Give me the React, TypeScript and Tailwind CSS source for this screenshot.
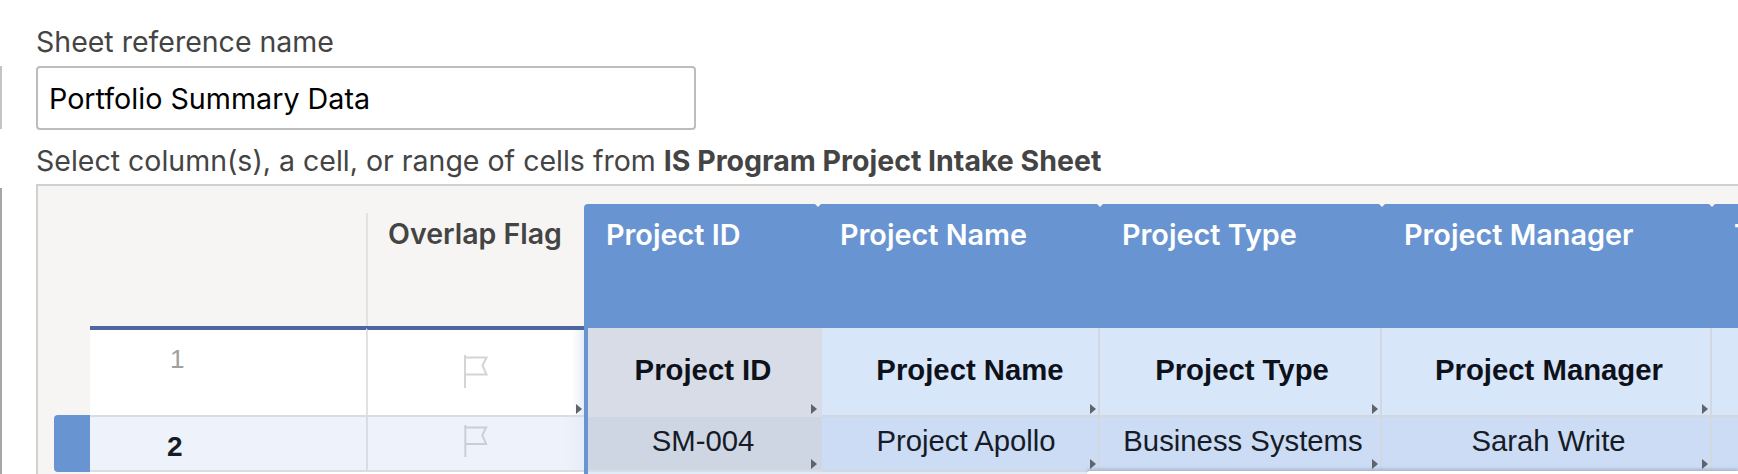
const columns = [
  { key: 'id', title: 'Project ID', value: 'SM-004', width: 'w-[234px]' },
  { key: 'name', title: 'Project Name', value: 'Project Apollo', width: 'w-[282px]' },
  { key: 'type', title: 'Project Type', value: 'Business Systems', width: 'w-[282px]' },
  { key: 'manager', title: 'Project Manager', value: 'Sarah Write', width: 'w-[330px]' },
];

function FlagIcon({ className }: { className: string }) {
  return (
    <svg viewBox="0 0 25 33" className={className} fill="none" stroke="currentColor" strokeWidth="2">
      <path d="M2 0V33" />
      <path d="M2 2.5H23.5L19.5 10.5L23.5 19.5H2" />
    </svg>
  );
}

// small dark triangle in the lower right corner of a cell
function CellMark() {
  return (
    <span className="absolute right-[2px] bottom-[1px] h-0 w-0 border-y-[5px] border-l-[6px] border-y-transparent border-l-[#5f636a]" />
  );
}

// white notch on top of the header where two columns meet
function HeaderNotch() {
  return (
    <span className="absolute -top-px right-[-4px] z-10 h-0 w-0 border-x-[4px] border-t-[4px] border-x-transparent border-t-[#f6f5f3]" />
  );
}

export default function App() {
  return (
    <div className="flex h-[474px] w-[1738px] overflow-hidden bg-white font-['Inter',sans-serif]">
      {/* edge of the panel next to this one */}
      <div className="flex w-[2px] shrink-0 flex-col">
        <div className="mt-[66px] h-[63px] bg-[#c4c4c4]" />
        <div className="mt-[59px] flex-1 bg-[#a6a6a6]" />
      </div>

      <div className="flex min-w-0 flex-1 flex-col pl-[34px]">
        <div className="pt-[27px] text-[28.5px] leading-[30px] text-[#444444]">Sheet reference name</div>
        <input
          readOnly
          value="Portfolio Summary Data"
          className="mt-[9px] block h-[64px] w-[660px] shrink-0 rounded-[4px] border-2 border-[#bdbdbd] bg-white px-[11px] text-[28.7px] text-black outline-none"
        />
        <div className="mt-[16px] whitespace-nowrap text-[28.5px] leading-[30px] text-[#444444]">
          Select column(s), a cell, or range of cells from <span className="font-bold">IS Program Project Intake Sheet</span>
        </div>

        <div className="relative mt-[8px] flex min-h-0 flex-1 flex-col border-t-2 border-l-2 border-[#d0d0d0] bg-[#f6f5f3]">
          {/* header */}
          <div className="flex h-[142px] shrink-0">
            <div className="w-[52px] shrink-0" />
            <div className="w-[276px] shrink-0 border-b-2 border-[#4f659f]" />
            <div className="w-[218px] shrink-0 border-b-2 border-[#4f659f]">
              <div className="mt-[27px] h-[113px] border-l-2 border-[#e2e2e2] pr-[2px] text-center">
                <div className="pt-[6px] whitespace-nowrap text-[28.5px] leading-[30px] font-semibold text-[#444444]">Overlap Flag</div>
              </div>
            </div>
            <div className="mt-[18px] flex flex-1 rounded-t-[4px] bg-[#6894d1]">
              {columns.map((col) => (
                <div key={col.key} className={`relative ${col.width} shrink-0 pt-[15px] pl-[22px]`}>
                  <div className="whitespace-nowrap text-[28.8px] leading-[32px] font-semibold text-white">{col.title}</div>
                  <HeaderNotch />
                </div>
              ))}
              <div className="flex-1 pt-[15px] pl-[22px] text-[28.8px] leading-[32px] font-semibold text-white">T</div>
            </div>
          </div>

          {/* row 1 */}
          <div className="flex h-[87px] shrink-0">
            <div className="w-[52px] shrink-0" />
            <div className="w-[276px] shrink-0 border-t-2 border-[#4f659f] bg-white pt-[14px] pl-[80px] font-['Liberation_Sans',sans-serif] text-[26px] leading-[30px] text-[#a0a0a0]">
              1
            </div>
            <div className="relative w-[218px] shrink-0 border-t-2 border-l-2 border-[#4f659f] border-l-[#e2e2e2] bg-white pt-[25px] pl-[95px]">
              <FlagIcon className="h-[33px] w-[25px] text-[#d4d4d4]" />
              <div className="absolute inset-y-0 right-0 w-[12px] bg-gradient-to-r from-transparent to-[#e8edf6]" />
              <CellMark />
            </div>
            <div className="flex flex-1 border-l-4 border-[#6894d1] font-['Liberation_Sans',sans-serif] text-[29.3px] font-bold text-[#0d111a]">
              <div className="relative flex w-[234px] shrink-0 items-center justify-center bg-[#d8dce6] pr-[4px] pb-[3px]">
                Project ID
                <span className="absolute right-[5px] bottom-[1px] h-0 w-0 border-y-[5px] border-l-[6px] border-y-transparent border-l-[#5f636a]" />
              </div>
              <div className="relative flex w-[278px] shrink-0 items-center justify-center border-r-2 border-[#d3d8e0] bg-[#d8e6f9] pb-[3px] pl-[20px]">
                {columns[1].title}
                <CellMark />
              </div>
              <div className="relative flex w-[282px] shrink-0 items-center justify-center border-r-2 border-[#d3d8e0] bg-[#d8e6f9] pb-[3px] pl-[4px]">
                {columns[2].title}
                <CellMark />
              </div>
              <div className="relative flex w-[330px] shrink-0 items-center justify-center border-r-2 border-[#d3d8e0] bg-[#d8e6f9] pb-[3px] pl-[6px]">
                {columns[3].title}
                <CellMark />
              </div>
              <div className="flex-1 bg-[#d8e6f9]" />
            </div>
          </div>

          {/* row 2 */}
          <div className="flex h-[57px] shrink-0">
            <div className="flex w-[52px] shrink-0 justify-end">
              <div className="h-full w-[36px] rounded-l-[4px] bg-[#6894d1]" />
            </div>
            <div className="w-[276px] shrink-0 border-y-2 border-[#d8dce4] bg-[#eef2fa] pt-[15px] pl-[77px] font-['Liberation_Sans',sans-serif] text-[28px] leading-[30px] font-bold text-[#161b26]">
              2
            </div>
            <div className="relative w-[218px] shrink-0 border-y-2 border-l-2 border-[#d8dce4] bg-[#eef2fa] pt-[8px] pl-[95px]">
              <FlagIcon className="h-[32px] w-[25px] text-[#c9ced6]" />
              <div className="absolute inset-y-0 right-0 w-[20px] bg-gradient-to-r from-transparent to-[#e6edf9]" />
            </div>
            <div className="flex flex-1 border-l-4 border-[#6894d1] font-['Liberation_Sans',sans-serif] text-[29.3px] text-[#161b26]">
              <div className="relative flex w-[234px] shrink-0 items-start justify-center border-y-2 border-[#d8dce4] bg-[#ced5e3] pt-[2px] pr-[4px]">
                {columns[0].value}
                <span className="absolute right-[5px] bottom-[1px] h-0 w-0 border-y-[5px] border-l-[6px] border-y-transparent border-l-[#5f636a]" />
              </div>
              <div className="relative flex w-[278px] shrink-0 items-start justify-center border-y-2 border-r-2 border-[#d3d8e0] bg-[#cbdcf4] pt-[2px] pl-[12px]">
                {columns[1].value}
                <CellMark />
              </div>
              <div className="relative flex w-[282px] shrink-0 items-start justify-center border-y-2 border-r-2 border-[#d3d8e0] bg-[#cbdcf4] pt-[2px] pl-[6px]">
                {columns[2].value}
                <CellMark />
              </div>
              <div className="relative flex w-[330px] shrink-0 items-start justify-center border-y-2 border-r-2 border-[#d3d8e0] bg-[#cbdcf4] pt-[2px] pl-[5px]">
                {columns[3].value}
                <CellMark />
              </div>
              <div className="flex-1 border-y-2 border-[#d3d8e0] bg-[#cbdcf4]" />
            </div>
          </div>

          {/* start of the next row */}
          <div className="flex min-h-0 flex-1">
            <div className="w-[52px] shrink-0" />
            <div className="w-[494px] shrink-0 bg-white" />
            <div className="flex-1 border-l-4 border-[#6894d1] bg-[#e0ebfa]" />
          </div>

          {/* edge of the popover that sits below the visible area */}
          <div className="absolute right-0 bottom-0 left-[1049px] h-[3px] rounded-tl-[4px] bg-white shadow-[0_-2px_3px_rgba(80,100,140,0.35)]" />
        </div>
      </div>
    </div>
  );
}
